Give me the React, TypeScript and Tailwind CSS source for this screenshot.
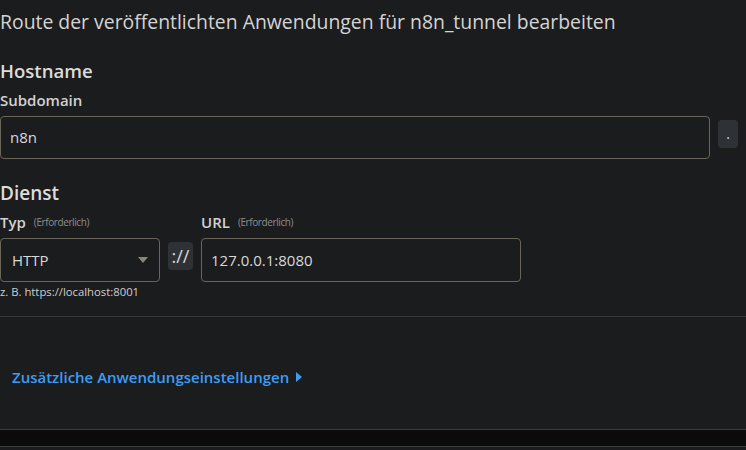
import React from "react";

const font = { fontFamily: '"Open Sans", "Noto Sans", sans-serif' };

function Caret() {
  return (
    <svg width="10" height="6" viewBox="0 0 10 6" className="block">
      <path d="M0 0 L10 0 L5 6 Z" fill="#8a857a" />
    </svg>
  );
}

export default function App() {
  return (
    <div className="w-[746px] h-[450px] overflow-hidden bg-[#1b1c1e] text-[#d6d6d6] flex flex-col" style={font}>
      <div className="h-[44px] flex items-center text-[19.4px] text-[#d4d4d4] whitespace-nowrap">
        Route der veröffentlichten Anwendungen für n8n_tunnel bearbeiten
      </div>
      <div className="mt-[14px] h-[26px] flex items-center text-[18.6px] font-semibold text-[#dcdcdc]">Hostname</div>
      <div className="mt-[6px] h-[21px] flex items-center text-[15px] font-semibold text-[#d2d2d2]">Subdomain</div>
      <div className="mt-[5px] flex items-start gap-[8px]">
        <div className="w-[710px] h-[43px] rounded-[4px] border border-[#6a655a] bg-[#1b1c1e] flex items-center px-[9px] text-[15px] text-[#d8d8d8]">
          n8n
        </div>
        <div className="mt-[4px] w-[20px] h-[28px] rounded-[4px] bg-[#2e3236] flex items-center justify-center text-[14px] text-[#d8d8d8] leading-none">
          .
        </div>
      </div>
      <div className="mt-[21px] h-[26px] flex items-center text-[19px] font-semibold text-[#dcdcdc]">Dienst</div>
      <div className="mt-[6px] flex items-start gap-[8px]">
        <div className="w-[160px] flex flex-col">
          <div className="h-[20px] flex items-center gap-[8px] whitespace-nowrap">
            <span className="text-[15px] font-semibold text-[#d2d2d2]">Typ</span>
            <span className="mt-[1px] text-[10px] tracking-[-0.4px] text-[#8e8e8e]">(Erforderlich)</span>
          </div>
          <div className="mt-[6px] h-[44px] rounded-[4px] border border-[#6a655a] flex items-center justify-between pl-[11px] pr-[11px] text-[15px] text-[#d8d8d8]">
            <span>HTTP</span>
            <Caret />
          </div>
          <div className="mt-[2px] h-[16px] flex items-center text-[11.3px] text-[#cfcfcf] whitespace-nowrap">
            z. B. https://localhost:8001
          </div>
        </div>
        <div className="mt-[30px] w-[25px] h-[28px] rounded-[4px] bg-[#2e3236] flex items-center justify-center text-[18px] text-[#d8d8d8]">
          ://
        </div>
        <div className="w-[320px] flex flex-col">
          <div className="h-[20px] flex items-center gap-[8px] whitespace-nowrap">
            <span className="text-[15px] font-semibold text-[#d2d2d2]">URL</span>
            <span className="mt-[1px] text-[10px] tracking-[-0.4px] text-[#8e8e8e]">(Erforderlich)</span>
          </div>
          <div className="mt-[6px] h-[44px] rounded-[4px] border border-[#6a655a] flex items-center px-[9px] text-[15px] text-[#d8d8d8]">
            127.0.0.1:8080
          </div>
        </div>
      </div>
      <div className="mt-[16px] border-t border-[#35383a]" />
      <div className="h-[112px] pt-[50px] pl-[12px]">
        <div className="h-[20px] flex items-center gap-[7px] text-[15px] font-semibold text-[#3d9df5] whitespace-nowrap">
          <span>Zusätzliche Anwendungseinstellungen</span>
          <svg width="6" height="10" viewBox="0 0 6 10" className="block">
            <path d="M0 0 L6 5 L0 10 Z" fill="#3d9df5" />
          </svg>
        </div>
      </div>
      <div className="border-t border-[#3a3d3e] h-[17px] bg-[#0b0b0b]" />
      <div className="border-t border-[#3a3d3e] flex-1" />
    </div>
  );
}
